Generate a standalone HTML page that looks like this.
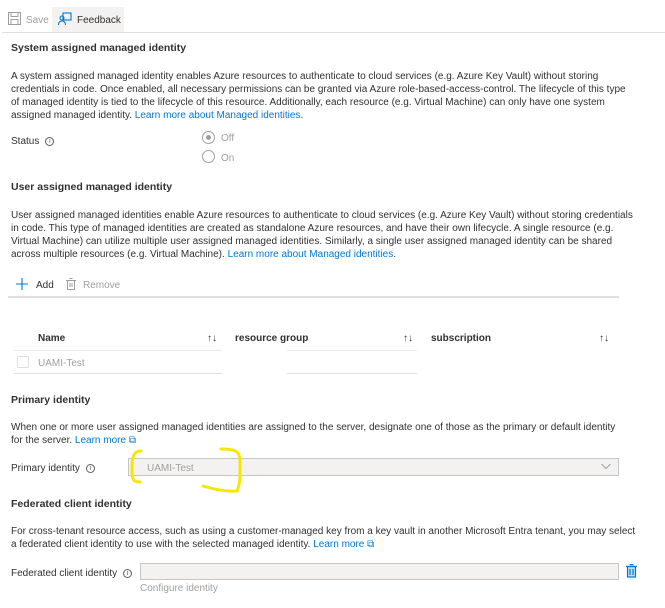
<!DOCTYPE html>
<html><head><meta charset="utf-8"><style>
*{margin:0;padding:0;box-sizing:border-box}
body{width:665px;height:608px;background:#fff;font-family:"Liberation Sans",sans-serif;font-size:10px;color:#323130;position:relative;overflow:hidden}
.a{position:absolute;white-space:nowrap;line-height:13px;margin-top:1px}
.h{font-weight:bold;font-size:10.5px}
.l{color:#0078d4}
.g{color:#a19f9d}
.ln{position:absolute;height:1px;background:#edebe9}
.info{display:inline-block;width:9px;height:9px;border:1px solid #605e5c;border-radius:50%;font-size:7px;line-height:7px;text-align:center;vertical-align:middle;margin-left:6px;color:#605e5c}
.radio{position:absolute;width:13px;height:13px;border:1px solid #a19f9d;border-radius:50%}
</style></head><body>
<div style="position:absolute;left:52px;top:7px;width:72px;height:25px;background:#f3f2f1"></div>
<svg style="position:absolute;left:8px;top:12px" width="13" height="13" viewBox="0 0 13 13"><rect x="0.5" y="0.5" width="12" height="12" fill="none" stroke="#a19f9d"/><rect x="3" y="0.5" width="7" height="4" fill="none" stroke="#a19f9d"/><rect x="3" y="7.5" width="7" height="5" fill="none" stroke="#a19f9d"/></svg>
<div class="a g" style="left:26px;top:13px">Save</div>
<svg style="position:absolute;left:58px;top:12px" width="14" height="14" viewBox="0 0 14 14" fill="none" stroke="#0078d4" stroke-width="1.1"><rect x="5" y="1" width="8" height="7"/><circle cx="4" cy="6" r="2"/><path d="M0.5 13c0-3 1.5-4 3.5-4s3.5 1 3.5 4"/></svg>
<div class="a" style="left:77px;top:13px">Feedback</div>
<div class="ln" style="left:2px;top:32px;width:663px;background:#e1dfdd"></div>

<div class="a h" style="left:11px;top:41px">System assigned managed identity</div>
<div class="a" style="left:11px;top:69px">A system assigned managed identity enables Azure resources to authenticate to cloud services (e.g. Azure Key Vault) without storing<br>credentials in code. Once enabled, all necessary permissions can be granted via Azure role-based-access-control. The lifecycle of this type<br>of managed identity is tied to the lifecycle of this resource. Additionally, each resource (e.g. Virtual Machine) can only have one system<br>assigned managed identity. <span class="l">Learn more about Managed identities</span>.</div>
<div class="a" style="left:11px;top:134px">Status<span class="info">i</span></div>
<div class="radio" style="left:202px;top:131px"><div style="position:absolute;left:3px;top:3px;width:5px;height:5px;border-radius:50%;background:#a19f9d"></div></div>
<div class="a g" style="left:221px;top:131px">Off</div>
<div class="radio" style="left:202px;top:150px"></div>
<div class="a g" style="left:221px;top:151px">On</div>

<div class="a h" style="left:11px;top:180px">User assigned managed identity</div>
<div class="a" style="left:11px;top:208px">User assigned managed identities enable Azure resources to authenticate to cloud services (e.g. Azure Key Vault) without storing credentials<br>in code. This type of managed identities are created as standalone Azure resources, and have their own lifecycle. A single resource (e.g.<br>Virtual Machine) can utilize multiple user assigned managed identities. Similarly, a single user assigned managed identity can be shared<br>across multiple resources (e.g. Virtual Machine). <span class="l">Learn more about Managed identities</span>.</div>

<svg style="position:absolute;left:16px;top:278px" width="12" height="12" viewBox="0 0 12 12" stroke="#0078d4" stroke-width="1.1"><path d="M6 0v12M0 6h12"/></svg>
<div class="a" style="left:36px;top:278px">Add</div>
<svg style="position:absolute;left:66px;top:278px" width="10" height="12" viewBox="0 0 10 12" fill="none" stroke="#a19f9d"><rect x="1.5" y="2.5" width="7" height="9"/><path d="M0 2.5h10M3.5 0.5h3M4 5v4M6 5v4"/></svg>
<div class="a g" style="left:83px;top:278px">Remove</div>
<div class="ln" style="left:8px;top:296px;width:611px;height:2px;background:#e1dfdd"></div>

<div class="a" style="left:38px;top:331px;font-weight:bold">Name</div>
<div class="a" style="left:207px;top:331px">↑↓</div>
<div class="a" style="left:235px;top:331px;font-weight:bold">resource group</div>
<div class="a" style="left:403px;top:331px">↑↓</div>
<div class="a" style="left:431px;top:331px;font-weight:bold">subscription</div>
<div class="a" style="left:599px;top:331px">↑↓</div>
<div class="ln" style="left:14px;top:350px;width:208px"></div>
<div class="ln" style="left:287px;top:350px;width:130px"></div>
<div style="position:absolute;left:17px;top:356px;width:12px;height:12px;border:1px solid #e1dfdd;border-radius:2px"></div>
<div class="a g" style="left:38px;top:356px">UAMI-Test</div>
<div class="ln" style="left:14px;top:373px;width:208px;background:#e1dfdd"></div>
<div class="ln" style="left:287px;top:373px;width:130px;background:#e1dfdd"></div>

<div class="a h" style="left:11px;top:393px">Primary identity</div>
<div class="a" style="left:11px;top:420px">When one or more user assigned managed identities are assigned to the server, designate one of those as the primary or default identity<br>for the server. <span class="l">Learn more ⧉</span></div>
<div class="a" style="left:11px;top:461px">Primary identity<span class="info">i</span></div>
<div style="position:absolute;left:128px;top:458px;width:491px;height:18px;background:#f3f2f1;border:1px solid #c8c6c4"></div>
<div class="a g" style="left:147px;top:461px">UAMI-Test</div>
<svg style="position:absolute;left:601px;top:463px" width="10" height="7" viewBox="0 0 10 7"><path d="M0.5 1l4.5 4.5 4.5-4.5" fill="none" stroke="#a19f9d"/></svg>
<svg style="position:absolute;left:125px;top:444px" width="125" height="52" viewBox="0 0 125 52" fill="none" stroke="#f5e700" stroke-width="3" stroke-linecap="round"><path d="M16 7C9 7 7 12 7 24s1 14 8 14"/><path d="M96 5c14 0 19 2 19 12s1 21-3 30c-12 1-24-2-34-5"/></svg>

<div class="a h" style="left:11px;top:497px">Federated client identity</div>
<div class="a" style="left:11px;top:524px">For cross-tenant resource access, such as using a customer-managed key from a key vault in another Microsoft Entra tenant, you may select<br>a federated client identity to use with the selected managed identity. <span class="l">Learn more ⧉</span></div>
<div class="a" style="left:11px;top:566px">Federated client identity<span class="info">i</span></div>
<div style="position:absolute;left:140px;top:563px;width:479px;height:17px;background:#f3f2f1;border:1px solid #c8c6c4"></div>
<svg style="position:absolute;left:626px;top:564px" width="11" height="14" viewBox="0 0 11 14" fill="none" stroke="#0078d4" stroke-width="1.2"><path d="M0 2.5h11M3.5 0.6h4"/><rect x="1.5" y="2.5" width="8" height="10.5" fill="#0078d4" fill-opacity=".25"/><path d="M4 5v6M7 5v6"/></svg>
<div class="a g" style="left:140px;top:581px">Configure identity</div>
</body></html>
